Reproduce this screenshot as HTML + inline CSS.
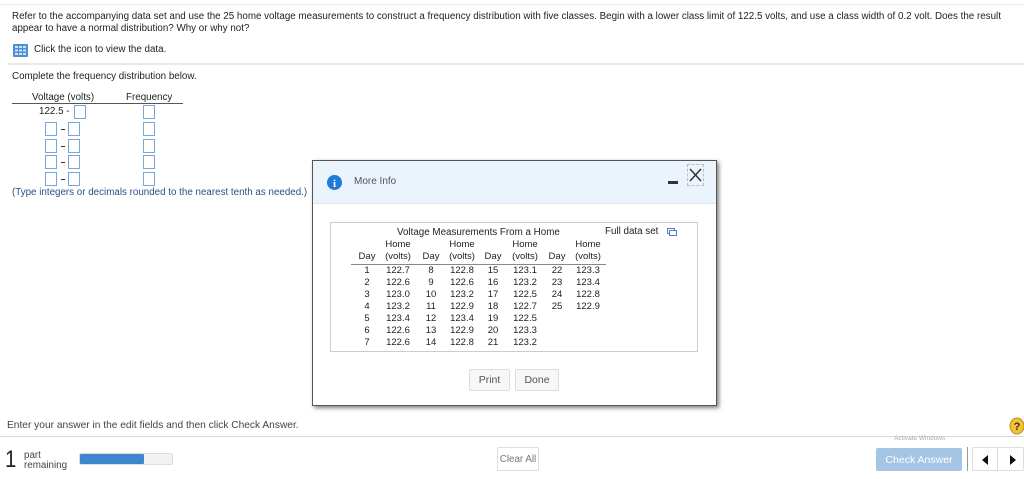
<!DOCTYPE html>
<html><head><style>
*{margin:0;padding:0;box-sizing:border-box}
body{width:1024px;height:479px;position:relative;background:#fff;font-family:"Liberation Sans",Arial,sans-serif;color:#222;font-size:9.8px;overflow:hidden}
.a{position:absolute;white-space:nowrap}
.bx{position:absolute;width:12px;height:14px;border:1px solid #7aa7d8;background:#fff}
.dash{position:absolute;width:4px;height:1px;background:#333}
.c{position:absolute;text-align:center;width:36px;font-size:9.5px}
</style></head><body>
<div class="a" style="left:0;top:4px;width:1024px;height:1px;background:#e8e8ee"></div>
<div class="a" style="left:12px;top:11px">Refer to the accompanying data set and use the 25 home voltage measurements to construct a frequency distribution with five classes. Begin with a lower class limit of 122.5 volts, and use a class width of 0.2 volt. Does the result</div>
<div class="a" style="left:12px;top:23px">appear to have a normal distribution? Why or why not?</div>
<svg class="a" style="left:13px;top:44px" width="15" height="13"><rect width="15" height="13" rx="1" fill="#4b8fd6"/><g fill="#cfe3f7"><rect x="2" y="2" width="3" height="2"/><rect x="6" y="2" width="3" height="2"/><rect x="10" y="2" width="3" height="2"/><rect x="2" y="5.5" width="3" height="2"/><rect x="6" y="5.5" width="3" height="2"/><rect x="10" y="5.5" width="3" height="2"/><rect x="2" y="9" width="3" height="2"/><rect x="6" y="9" width="3" height="2"/><rect x="10" y="9" width="3" height="2"/></g></svg>
<div class="a" style="left:34px;top:44px">Click the icon to view the data.</div>
<div class="a" style="left:8px;top:63px;width:1016px;height:2px;background:#e8e8ee"></div>
<div class="a" style="left:12px;top:71px">Complete the frequency distribution below.</div>
<div class="a" style="left:32px;top:92px">Voltage (volts)</div>
<div class="a" style="left:126px;top:92px">Frequency</div>
<div class="a" style="left:12px;top:103px;width:171px;height:1px;background:#555"></div>
<div class="a" style="left:39px;top:106px">122.5 -</div>
<div class="bx" style="left:74px;top:105px"></div>
<div class="bx" style="left:143px;top:105px"></div>
<div class="bx" style="left:45px;top:122px"></div><div class="dash" style="left:61px;top:129px"></div><div class="bx" style="left:68px;top:122px"></div><div class="bx" style="left:143px;top:122px"></div>
<div class="bx" style="left:45px;top:139px"></div><div class="dash" style="left:61px;top:146px"></div><div class="bx" style="left:68px;top:139px"></div><div class="bx" style="left:143px;top:139px"></div>
<div class="bx" style="left:45px;top:155px"></div><div class="dash" style="left:61px;top:162px"></div><div class="bx" style="left:68px;top:155px"></div><div class="bx" style="left:143px;top:155px"></div>
<div class="bx" style="left:45px;top:172px"></div><div class="dash" style="left:61px;top:179px"></div><div class="bx" style="left:68px;top:172px"></div><div class="bx" style="left:143px;top:172px"></div>
<div class="a" style="left:12px;top:187px;color:#2a4f86">(Type integers or decimals rounded to the nearest tenth as needed.)</div>

<div class="a" style="left:312px;top:160px;width:405px;height:246px;border:1px solid #555;background:#fff;box-shadow:2px 2px 4px rgba(0,0,0,.5)">
  <div class="a" style="left:0;top:0;width:403px;height:43px;background:#ebf3fc;border-bottom:1px solid #dde6f0"></div>
  <svg class="a" style="left:14px;top:14px" width="15" height="15"><circle cx="7.5" cy="7.5" r="7.5" fill="#1f7bd6"/><text x="7.5" y="12" text-anchor="middle" fill="#fff" font-size="11" font-weight="bold" font-family="Liberation Serif">i</text></svg>
  <div class="a" style="left:41px;top:15px;color:#555;font-size:10px">More Info</div>
  <div class="a" style="left:355px;top:20px;width:10px;height:3px;background:#333"></div>
  <div class="a" style="left:374px;top:3px;width:17px;height:22px;border:1px dashed #bbb"></div>
  <svg class="a" style="left:376px;top:7px" width="13" height="14"><path d="M1 1 L12 13 M12 1 L1 13" stroke="#333" stroke-width="1.5"/></svg>
  <div class="a" style="left:17px;top:61px;width:368px;height:130px;border:1px solid #ccc"></div>
  <div class="a" style="left:84px;top:66px">Voltage Measurements From a Home</div>
  <div class="a" style="left:292px;top:65px">Full data set</div>
  <svg class="a" style="left:354px;top:67px" width="10" height="8"><rect x="0.5" y="0.5" width="7" height="5" fill="none" stroke="#4a7fc4"/><rect x="2.5" y="2.5" width="7" height="5" fill="#fff" stroke="#4a7fc4"/></svg>
  <div class="a" style="left:38px;top:103px;width:255px;height:1px;background:#888"></div>
</div>
<div class="c" style="left:380px;top:239px">Home</div><div class="c" style="left:444px;top:239px">Home</div><div class="c" style="left:507px;top:239px">Home</div><div class="c" style="left:570px;top:239px">Home</div>
<div class="c" style="left:349px;top:251px">Day</div><div class="c" style="left:380px;top:251px">(volts)</div><div class="c" style="left:413px;top:251px">Day</div><div class="c" style="left:444px;top:251px">(volts)</div><div class="c" style="left:475px;top:251px">Day</div><div class="c" style="left:507px;top:251px">(volts)</div><div class="c" style="left:539px;top:251px">Day</div><div class="c" style="left:570px;top:251px">(volts)</div>
<div class="c" style="left:349px;top:265px;line-height:12px">1<br>2<br>3<br>4<br>5<br>6<br>7</div>
<div class="c" style="left:380px;top:265px;line-height:12px">122.7<br>122.6<br>123.0<br>123.2<br>123.4<br>122.6<br>122.6</div>
<div class="c" style="left:413px;top:265px;line-height:12px">8<br>9<br>10<br>11<br>12<br>13<br>14</div>
<div class="c" style="left:444px;top:265px;line-height:12px">122.8<br>122.6<br>123.2<br>122.9<br>123.4<br>122.9<br>122.8</div>
<div class="c" style="left:475px;top:265px;line-height:12px">15<br>16<br>17<br>18<br>19<br>20<br>21</div>
<div class="c" style="left:507px;top:265px;line-height:12px">123.1<br>123.2<br>122.5<br>122.7<br>122.5<br>123.3<br>123.2</div>
<div class="c" style="left:539px;top:265px;line-height:12px">22<br>23<br>24<br>25</div>
<div class="c" style="left:570px;top:265px;line-height:12px">123.3<br>123.4<br>122.8<br>122.9</div>
<div class="a" style="left:469px;top:369px;width:41px;height:22px;border:1px solid #ddd;border-radius:2px;background:#f7f7f7;color:#555;text-align:center;line-height:21px;font-size:10.5px">Print</div>
<div class="a" style="left:515px;top:369px;width:44px;height:22px;border:1px solid #ddd;border-radius:2px;background:#f7f7f7;color:#555;text-align:center;line-height:21px;font-size:10.5px">Done</div>

<div class="a" style="left:7px;top:420px;color:#444;font-size:10.2px">Enter your answer in the edit fields and then click Check Answer.</div>
<svg class="a" style="left:1008px;top:417px" width="16" height="18"><ellipse cx="9" cy="9" rx="7" ry="8" fill="#f3c234" stroke="#b8901b"/><text x="9" y="13" text-anchor="middle" font-size="11" font-weight="bold" fill="#333">?</text></svg>
<div class="a" style="left:0;top:436px;width:1024px;height:1px;background:#d8d8e0"></div>
<div class="a" style="left:5px;top:447px;font-size:24px;color:#222;line-height:26px;transform:scaleX(.85);transform-origin:left">1</div>
<div class="a" style="left:24px;top:451px;color:#444;line-height:10px">part<br>remaining</div>
<div class="a" style="left:79px;top:453px;width:94px;height:12px;border:1px solid #ddd;border-radius:2px;background:#f2f2f2"><div style="width:64px;height:10px;background:#3f86cf;border-radius:1px"></div></div>
<div class="a" style="left:497px;top:447px;width:42px;height:24px;border:1px solid #ddd;border-radius:2px;color:#777;text-align:center;line-height:24px">Clear All</div>
<div class="a" style="left:894px;top:435px;font-size:6.5px;color:#aaa">Activate Windows</div>
<div class="a" style="left:876px;top:448px;width:86px;height:23px;background:#a4c5e3;border-radius:2px;color:#fff;text-align:center;line-height:24px;font-size:10.5px">Check Answer</div>
<div class="a" style="left:967px;top:447px;width:1px;height:24px;background:#999"></div>
<div class="a" style="left:972px;top:447px;width:52px;height:24px;border:1px solid #ddd;border-radius:2px"></div>
<div class="a" style="left:997px;top:448px;width:1px;height:22px;background:#ddd"></div>
<svg class="a" style="left:981px;top:454px" width="40" height="12"><path d="M7 1 L1 6 L7 11Z" fill="#111"/><path d="M29 1 L35 6 L29 11Z" fill="#111"/></svg>
</body></html>
